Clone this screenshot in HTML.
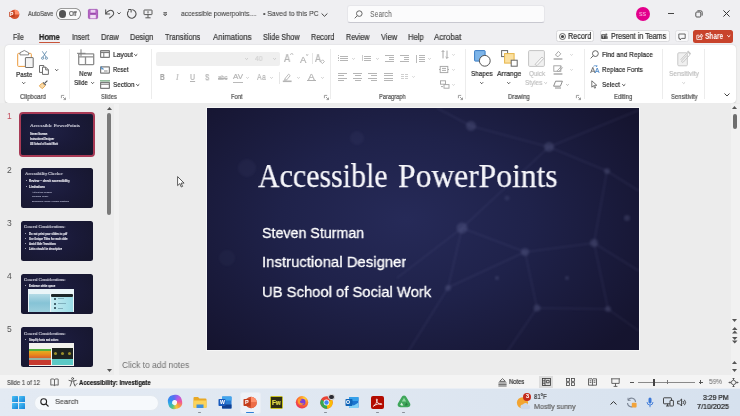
<!DOCTYPE html>
<html lang="en"><head><meta charset="utf-8"><title>accessible powerpoints - PowerPoint</title>
<style>
*{box-sizing:border-box;margin:0;padding:0}
html,body{width:740px;height:416px;overflow:hidden;background:#f0f0f0;font-family:"Liberation Sans",sans-serif}
#app{position:absolute;left:0;top:0;width:740px;height:416px;overflow:hidden;background:#f0f0f0}
.t{-webkit-text-stroke:.22px;position:absolute;white-space:nowrap;transform-origin:0 50%;display:block;will-change:transform}
.a{position:absolute}
svg{position:absolute;overflow:visible}
.sep{position:absolute;width:1px;background:#ececec;top:49px;height:50px}
</style></head><body><div id="app">
<div class="a" style="left:0;top:0;width:740px;height:46px;background:#efeff2"></div>
<svg style="left:8.500px;top:8.600px" width="10.800" height="10.800" viewBox="0 0 12 12"><circle cx="6.3" cy="6" r="5.2" fill="#d35230"/><path d="M6.3 .8A5.2 5.2 0 0 1 11.5 6H6.3z" fill="#ff8f6b"/><rect x="0.3" y="3" width="6" height="6" rx="1" fill="#c43e1c"/></svg>
<span class="t" style="left:10.3px;top:11.10px;font-size:5px;line-height:6.00px;color:#fff;font-weight:700;font-family:'Liberation Sans', sans-serif;transform:scaleX(1.0000);-webkit-text-stroke:.08px;">P</span>
<span class="t" style="left:28px;top:10.00px;font-size:7px;line-height:8.40px;color:#555;font-weight:400;font-family:'Liberation Sans', sans-serif;transform:scaleX(0.8333);">AutoSave</span>
<div class="a" style="left:56px;top:8.200px;width:25px;height:11.600px;box-shadow:inset 0 0 0 .85px #7d7d7d;border-radius:6px;background:#fafafa"></div>
<div class="a" style="left:58.5px;top:10.3px;width:7.4px;height:7.4px;border-radius:50%;background:#555"></div>
<span class="t" style="left:69px;top:10.30px;font-size:6.5px;line-height:7.80px;color:#555;font-weight:400;font-family:'Liberation Sans', sans-serif;transform:scaleX(0.8889);">Off</span>
<svg style="left:88px;top:8.8px" width="10" height="10" viewBox="0 0 10 10"><rect x=".4" y=".4" width="9.200" height="9.200" rx="1" fill="#b565c4" stroke="#9a45ad" stroke-width=".8"/><rect x="2.600" y=".8" width="4.800" height="2.800" fill="#e9cdf0"/><rect x="2.200" y="5.800" width="5.600" height="3.600" fill="#f0def4"/><rect x="2.200" y="4.400" width="5.600" height="1" fill="#8a3aa0"/></svg>
<svg style="left:104px;top:8px" width="12" height="12" viewBox="0 0 12 12" fill="none" stroke="#505050" stroke-width="1.050" stroke-linecap="round" stroke-linejoin="round"><path d="M1.700 1.800v4.200h4"/><path d="M1.900 5.800C3.400 2.800 6.600 1.400 8.600 3c1.800 1.500 1.300 3.800-.6 5.200L5.600 10"/></svg>
<svg style="left:117px;top:12.3px" width="4" height="2.400" viewBox="0 0 4 2.400" fill="none" stroke="#444" stroke-width=".9"><path d="M.4 .4l1.600 1.600 1.600-1.600"/></svg>
<svg style="left:126px;top:8px" width="12" height="12" viewBox="0 0 12 12" fill="none" stroke="#505050" stroke-width="1.050" stroke-linecap="round" stroke-linejoin="round"><path d="M2.600 1.400h2.500v2.500"/><path d="M6.710 1.650A4.300 4.300 0 1 1 2.600 2.900"/></svg>
<svg style="left:143px;top:8.700px" width="10" height="10" viewBox="0 0 10 10" fill="none" stroke="#505050" stroke-width=".95"><rect x="1" y="1" width="8" height="4.600" rx=".4"/><path d="M5 5.600v3M2.400 8.800h5.200M5 2.200v2.200"/></svg>
<svg style="left:162.500px;top:11.600px" width="4.400" height="4.600" viewBox="0 0 4.400 4.600" fill="none" stroke="#444" stroke-width=".8"><path d="M.4 .6h3.600M.6 2l1.600 2 1.600-2z"/></svg>
<span class="t" style="left:181px;top:9.30px;font-size:8px;line-height:9.60px;color:#444;font-weight:400;font-family:'Liberation Sans', sans-serif;transform:scaleX(0.8261);-webkit-text-stroke:.1px;">accessible powerpoints....</span>
<span class="t" style="left:263px;top:9.30px;font-size:8px;line-height:9.60px;color:#444;font-weight:400;font-family:'Liberation Sans', sans-serif;transform:scaleX(0.8615);-webkit-text-stroke:.1px;">• Saved to this PC</span>
<svg style="left:321px;top:12.500px" width="7" height="4" viewBox="0 0 7 4" fill="none" stroke="#444" stroke-width="1"><path d="M.6 .5l2.9 2.8 2.9-2.8"/></svg>
<div class="a" style="left:347px;top:5px;width:198px;height:18px;border-radius:3px;background:#fbfbfc;border:1px solid #e6e6ea;border-bottom-color:#c8c8d0"></div>
<svg style="left:354px;top:10px" width="9" height="9" viewBox="0 0 9 9" fill="none" stroke="#666" stroke-width="1"><circle cx="5.3" cy="3.6" r="2.8"/><path d="M3.3 5.7L.7 8.3"/></svg>
<span class="t" style="left:370.4px;top:9.00px;font-size:8.5px;line-height:10.20px;color:#5e5e5e;font-weight:400;font-family:'Liberation Sans', sans-serif;transform:scaleX(0.8074);-webkit-text-stroke:0;">Search</span>
<div class="a" style="left:635.5px;top:6.8px;width:14px;height:14px;border-radius:50%;background:#e3008c"></div>
<span class="t" style="left:638.8px;top:11.00px;font-size:5px;line-height:6.00px;color:#f7b3dc;font-weight:400;font-family:'Liberation Sans', sans-serif;transform:scaleX(1.0571);-webkit-text-stroke:.08px;">SS</span>
<div class="a" style="left:668px;top:12.6px;width:5.5px;height:1px;background:#444"></div>
<svg style="left:694.5px;top:9.5px" width="8" height="8" viewBox="0 0 8 8" fill="none" stroke="#444" stroke-width=".9"><rect x=".8" y="2" width="5" height="5" rx="1"/><path d="M2.4 .8h3.3a1.5 1.5 0 0 1 1.5 1.5v3.3"/></svg>
<svg style="left:722.5px;top:9.5px" width="7" height="7" viewBox="0 0 7 7" fill="none" stroke="#333" stroke-width="1"><path d="M.4 .4l6.2 6.2M6.6 .4L.4 6.6"/></svg>
<span class="t" style="left:13px;top:31.50px;font-size:8.5px;line-height:10.20px;color:#3a3a3a;font-weight:400;font-family:'Liberation Sans', sans-serif;transform:scaleX(0.7857);">File</span>
<span class="t" style="left:39px;top:31.50px;font-size:8.5px;line-height:10.20px;color:#222;font-weight:700;font-family:'Liberation Sans', sans-serif;transform:scaleX(0.8750);">Home</span>
<span class="t" style="left:72px;top:31.50px;font-size:8.5px;line-height:10.20px;color:#3a3a3a;font-weight:400;font-family:'Liberation Sans', sans-serif;transform:scaleX(0.8095);">Insert</span>
<span class="t" style="left:101px;top:31.50px;font-size:8.5px;line-height:10.20px;color:#3a3a3a;font-weight:400;font-family:'Liberation Sans', sans-serif;transform:scaleX(0.9000);">Draw</span>
<span class="t" style="left:130px;top:31.50px;font-size:8.5px;line-height:10.20px;color:#3a3a3a;font-weight:400;font-family:'Liberation Sans', sans-serif;transform:scaleX(0.8846);">Design</span>
<span class="t" style="left:165px;top:31.50px;font-size:8.5px;line-height:10.20px;color:#3a3a3a;font-weight:400;font-family:'Liberation Sans', sans-serif;transform:scaleX(0.8537);">Transitions</span>
<span class="t" style="left:212.5px;top:31.50px;font-size:8.5px;line-height:10.20px;color:#3a3a3a;font-weight:400;font-family:'Liberation Sans', sans-serif;transform:scaleX(0.9167);">Animations</span>
<span class="t" style="left:263px;top:31.50px;font-size:8.5px;line-height:10.20px;color:#3a3a3a;font-weight:400;font-family:'Liberation Sans', sans-serif;transform:scaleX(0.8605);">Slide Show</span>
<span class="t" style="left:311px;top:31.50px;font-size:8.5px;line-height:10.20px;color:#3a3a3a;font-weight:400;font-family:'Liberation Sans', sans-serif;transform:scaleX(0.8519);">Record</span>
<span class="t" style="left:345.5px;top:31.50px;font-size:8.5px;line-height:10.20px;color:#3a3a3a;font-weight:400;font-family:'Liberation Sans', sans-serif;transform:scaleX(0.8393);">Review</span>
<span class="t" style="left:380.7px;top:31.50px;font-size:8.5px;line-height:10.20px;color:#3a3a3a;font-weight:400;font-family:'Liberation Sans', sans-serif;transform:scaleX(0.8778);">View</span>
<span class="t" style="left:407.7px;top:31.50px;font-size:8.5px;line-height:10.20px;color:#3a3a3a;font-weight:400;font-family:'Liberation Sans', sans-serif;transform:scaleX(0.9000);">Help</span>
<span class="t" style="left:434px;top:31.50px;font-size:8.5px;line-height:10.20px;color:#3a3a3a;font-weight:400;font-family:'Liberation Sans', sans-serif;transform:scaleX(0.9310);">Acrobat</span>
<div class="a" style="left:39px;top:41.700px;width:21px;height:1.200px;border-radius:1px;background:#c8543a"></div>
<div class="a" style="left:556.400px;top:30.200px;width:38px;height:12px;border:1px solid #d9d9dc;border-radius:2.500px;background:#fcfcfc"></div>
<svg style="left:558.5px;top:33.3px" width="7" height="7" viewBox="0 0 7 7"><circle cx="3.5" cy="3.5" r="3" fill="none" stroke="#444" stroke-width=".8"/><circle cx="3.5" cy="3.5" r="1.6" fill="#444"/></svg>
<span class="t" style="left:568px;top:31.12px;font-size:8.8px;line-height:10.56px;color:#2e2e2e;font-weight:400;font-family:'Liberation Sans', sans-serif;transform:scaleX(0.8214);">Record</span>
<div class="a" style="left:599.600px;top:30.200px;width:70px;height:12px;border:1px solid #d9d9dc;border-radius:2.500px;background:#fcfcfc"></div>
<svg style="left:601.400px;top:33px" width="7" height="7" viewBox="0 0 7 7"><circle cx="5.300" cy="1.700" r="1.100" fill="#666"/><rect x="3.600" y="2.900" width="3.200" height="3.200" rx=".9" fill="#777"/><rect x=".2" y="1.200" width="4.400" height="4.800" rx=".7" fill="#4a4a4a"/><path d="M1.200 2.600h2.400M2.400 2.600v2.600" stroke="#fff" stroke-width=".6"/></svg>
<span class="t" style="left:611.2px;top:31.12px;font-size:8.8px;line-height:10.56px;color:#2e2e2e;font-weight:400;font-family:'Liberation Sans', sans-serif;transform:scaleX(0.8132);">Present in Teams</span>
<div class="a" style="left:675px;top:30.200px;width:13.500px;height:12px;border:1px solid #e2e2e5;border-radius:2.500px;background:#f8f8fa"></div>
<svg style="left:678px;top:32.5px" width="8" height="8" viewBox="0 0 8 8" fill="none" stroke="#444" stroke-width=".8" stroke-linejoin="round"><path d="M.8 1h6.4v4.4H3.6L2 7V5.4H.8z"/></svg>
<div class="a" style="left:692.700px;top:29.800px;width:40.300px;height:12.800px;border-radius:2.500px;background:#c8432c"></div>
<svg style="left:695.5px;top:33px" width="7" height="7" viewBox="0 0 7 7" fill="none" stroke="#fff" stroke-width=".8" stroke-linejoin="round"><path d="M3 2.2H.8v4.2h5V4.8"/><path d="M2.4 4.8c.3-1.6 1.3-2.5 2.8-2.5V.9l1.6 1.9-1.6 1.9V3.4C4 3.4 3 3.8 2.4 4.8z"/></svg>
<span class="t" style="left:705px;top:31.12px;font-size:8.8px;line-height:10.56px;color:#fff;font-weight:700;font-family:'Liberation Sans', sans-serif;transform:scaleX(0.7375);-webkit-text-stroke:0;">Share</span>
<svg style="left:727px;top:35.400px" width="3.600" height="2.200" viewBox="0 0 3.600 2.200" fill="none" stroke="#fff" stroke-width="1"><path d="M.3 .3l1.500 1.500 1.500-1.500"/></svg>
<div class="a" style="left:5px;top:45px;width:731px;height:58px;border-radius:4px;background:#fff;box-shadow:0 .5px 1.5px rgba(0,0,0,.18)"></div>
<div class="sep" style="left:68.5px"></div>
<div class="sep" style="left:150.5px"></div>
<div class="sep" style="left:330px"></div>
<div class="sep" style="left:464.5px"></div>
<div class="sep" style="left:584px"></div>
<div class="sep" style="left:662px"></div>
<div class="sep" style="left:704px"></div>
<svg style="left:16.500px;top:49.500px" width="17" height="18" viewBox="0 0 17 18" fill="none"><path d="M3 3.400H1.500a.8 .8 0 0 0-.8 .8v11.400a.8 .8 0 0 0 .8 .8H8" stroke="#ec9a3c" stroke-width="1"/><path d="M11.600 3.400h1.900a.8 .8 0 0 1 .8 .8v3" stroke="#ec9a3c" stroke-width="1"/><path d="M3 4.900V2.700L7.300 .5l4.300 2.200v2.200z" stroke="#7a7a7a" stroke-width=".9" fill="#fff"/><rect x="8.400" y="7.600" width="7.800" height="9.900" rx=".3" fill="#f4f4f4" stroke="#666" stroke-width=".95"/></svg>
<span class="t" style="left:15.5px;top:69.50px;font-size:8px;line-height:9.60px;color:#2e2e2e;font-weight:400;font-family:'Liberation Sans', sans-serif;transform:scaleX(0.8000);">Paste</span>
<svg style="left:21.8px;top:82.0px" width="3.4" height="2" viewBox="0 0 3.4 2" fill="none" stroke="#444" stroke-width="1"><path d="M.3 .3L1.7 1.7L3.1 .3"/></svg>
<svg style="left:40.500px;top:50.500px" width="7" height="9" viewBox="0 0 7 9" fill="none" stroke="#5482a6" stroke-width=".8"><path d="M1.300 .3l3.900 5.900M5.700 .3L1.800 6.200"/><circle cx="1.600" cy="7.200" r="1.100"/><circle cx="5.400" cy="7.200" r="1.100"/></svg>
<svg style="left:39px;top:64.500px" width="10" height="10" viewBox="0 0 10 10" fill="none" stroke="#555" stroke-width=".85"><path d="M3.200 7.400H.5V.5h4.300v1.700"/><path d="M3.500 2.200h3.400l2.500 2.500v4.700H3.500z" fill="#fff"/><path d="M6.700 2.400v2.500h2.500"/></svg>
<svg style="left:55.3px;top:69.0px" width="3.4" height="2" viewBox="0 0 3.4 2" fill="none" stroke="#444" stroke-width="1"><path d="M.3 .3L1.7 1.7L3.1 .3"/></svg>
<svg style="left:39.300px;top:79.500px" width="9" height="9" viewBox="0 0 9 9" fill="none"><path d="M5.800 3.200L8.400 .6" stroke="#555" stroke-width="1.200"/><path d="M3.400 3l2.800 2.800-2.600 2.600a.6 .6 0 0 1-.8 0L.6 6.200a.6 .6 0 0 1 0-.8z" fill="#f8d9a8" stroke="#e39a35" stroke-width=".8"/><path d="M4 2.400l2.800 2.800" stroke="#555" stroke-width="1.100"/></svg>
<span class="t" style="left:20px;top:92.80px;font-size:7px;line-height:8.40px;color:#555;font-weight:400;font-family:'Liberation Sans', sans-serif;transform:scaleX(0.8667);">Clipboard</span>
<svg style="left:61.0px;top:94.5px" width="5" height="5" viewBox="0 0 5 5" fill="none" stroke="#777" stroke-width=".7"><path d="M.4 3.2V.4h2.8"/><path d="M2 2l2.4 2.4M4.5 2.6v2h-2"/></svg>
<svg style="left:75.500px;top:49px" width="19" height="17" viewBox="0 0 19 17" fill="none" stroke="#8c8c8c" stroke-width="1.300"><rect x="2.700" y="4.800" width="15" height="10.800" rx=".5"/><path d="M2.700 7.800h15M9.500 7.800v7.800"/><path d="M5 .3v7M1 4.300h8.500" stroke="#808080" stroke-width="1"/></svg>
<span class="t" style="left:78.8px;top:68.80px;font-size:8px;line-height:9.60px;color:#2e2e2e;font-weight:400;font-family:'Liberation Sans', sans-serif;transform:scaleX(0.8125);">New</span>
<span class="t" style="left:74.4px;top:77.80px;font-size:8px;line-height:9.60px;color:#2e2e2e;font-weight:400;font-family:'Liberation Sans', sans-serif;transform:scaleX(0.7833);">Slide</span>
<svg style="left:91.2px;top:82.05px" width="3.2" height="1.9" viewBox="0 0 3.2 1.9" fill="none" stroke="#444" stroke-width="1"><path d="M.3 .3L1.6 1.5999999999999999L2.9000000000000004 .3"/></svg>
<svg style="left:100px;top:50.3px" width="10" height="8" viewBox="0 0 10 8" fill="none" stroke="#7c7c7c" stroke-width="1.200"><rect x=".6" y=".6" width="8.800" height="6.800" rx=".4"/><path d="M.6 2.400h8.800" stroke-width="1.400"/><path d="M3.800 2.600v5" stroke-width="1"/></svg>
<span class="t" style="left:112.5px;top:49.50px;font-size:8px;line-height:9.60px;color:#2e2e2e;font-weight:400;font-family:'Liberation Sans', sans-serif;transform:scaleX(0.8333);">Layout</span>
<svg style="left:134.39999999999998px;top:53.8px" width="3.6" height="2" viewBox="0 0 3.6 2" fill="none" stroke="#444" stroke-width="1"><path d="M.3 .3L1.8 1.7L3.3000000000000003 .3"/></svg>
<svg style="left:100px;top:65.8px" width="10" height="8" viewBox="0 0 10 8" fill="none" stroke="#7c7c7c" stroke-width="1.200"><rect x=".6" y=".8" width="8.800" height="6.400" rx=".4"/><path d="M3.200 3.400L1.400 1.200M1.300 .3v2.600h2.400" stroke="#5a93c8" stroke-width="1"/><path d="M4 5h3.600" stroke-width=".9"/></svg>
<span class="t" style="left:112.5px;top:64.70px;font-size:8px;line-height:9.60px;color:#2e2e2e;font-weight:400;font-family:'Liberation Sans', sans-serif;transform:scaleX(0.7381);">Reset</span>
<svg style="left:100px;top:80.0px" width="10" height="9" viewBox="0 0 10 9" fill="none" stroke="#7c7c7c" stroke-width="1.200"><rect x=".6" y="2.400" width="8.800" height="6" rx=".4"/><path d="M0 .8h10" stroke="#8dbb97" stroke-width="1.500"/><path d="M.6 4.200h8.800" stroke-width="1.100"/></svg>
<span class="t" style="left:112.5px;top:79.70px;font-size:8px;line-height:9.60px;color:#2e2e2e;font-weight:400;font-family:'Liberation Sans', sans-serif;transform:scaleX(0.8037);">Section</span>
<svg style="left:136.39999999999998px;top:84.0px" width="3.6" height="2" viewBox="0 0 3.6 2" fill="none" stroke="#444" stroke-width="1"><path d="M.3 .3L1.8 1.7L3.3000000000000003 .3"/></svg>
<span class="t" style="left:101px;top:92.80px;font-size:7px;line-height:8.40px;color:#555;font-weight:400;font-family:'Liberation Sans', sans-serif;transform:scaleX(0.8316);">Slides</span>
<div class="a" style="left:155.500px;top:52px;width:95px;height:13.500px;background:#efefef;border-radius:2px 0 0 2px"></div>
<div class="a" style="left:251px;top:52px;width:29px;height:13.500px;background:#efefef;border-radius:0 2px 2px 0"></div>
<svg style="left:245.4px;top:58.1px" width="3.2" height="1.8" viewBox="0 0 3.2 1.8" fill="none" stroke="#c8c8c8" stroke-width="1"><path d="M.3 .3L1.6 1.5L2.9000000000000004 .3"/></svg>
<span class="t" style="left:254.5px;top:54.60px;font-size:7px;line-height:8.40px;color:#d2d2d2;font-weight:400;font-family:'Liberation Sans', sans-serif;transform:scaleX(0.9375);">40</span>
<svg style="left:272.9px;top:58.1px" width="3.2" height="1.8" viewBox="0 0 3.2 1.8" fill="none" stroke="#c8c8c8" stroke-width="1"><path d="M.3 .3L1.6 1.5L2.9000000000000004 .3"/></svg>
<span class="t" style="left:283.8px;top:52.00px;font-size:10.5px;line-height:12.60px;color:#b4b4b4;font-weight:400;font-family:'Liberation Sans', sans-serif;transform:scaleX(0.8857);">A</span>
<span class="t" style="left:290.3px;top:52.00px;font-size:5px;line-height:6.00px;color:#b4b4b4;font-weight:400;font-family:'Liberation Sans', sans-serif;transform:scaleX(1.5000);-webkit-text-stroke:.08px;">^</span>
<span class="t" style="left:299.5px;top:53.50px;font-size:9.5px;line-height:11.40px;color:#b4b4b4;font-weight:400;font-family:'Liberation Sans', sans-serif;transform:scaleX(1.0000);">A</span>
<span class="t" style="left:305.8px;top:52.80px;font-size:4px;line-height:4.80px;color:#b4b4b4;font-weight:400;font-family:'Liberation Sans', sans-serif;transform:scaleX(1.2000);-webkit-text-stroke:.08px;">v</span>
<div class="a" style="left:312px;top:53px;width:1px;height:11px;background:#e6e6e6"></div>
<span class="t" style="left:315px;top:52.00px;font-size:10.5px;line-height:12.60px;color:#b4b4b4;font-weight:400;font-family:'Liberation Sans', sans-serif;transform:scaleX(0.8571);">A</span>
<svg style="left:320px;top:58.800px" width="5" height="5" viewBox="0 0 5 5" fill="none" stroke="#b0b0b0" stroke-width=".9"><path d="M.6 2.800L2.600 .8l1.800 1.800-2 2z"/></svg>
<span class="t" style="left:159.5px;top:72.40px;font-size:8.5px;line-height:10.20px;color:#a8a8a8;font-weight:700;font-family:'Liberation Sans', sans-serif;transform:scaleX(0.7500);">B</span>
<span class="t" style="left:175.5px;top:72.40px;font-size:8.5px;line-height:10.20px;color:#b4b4b4;font-weight:400;font-family:'Liberation Serif', serif;transform:scaleX(0.8333);font-style:italic;">I</span>
<span class="t" style="left:189.5px;top:72.10px;font-size:8.5px;line-height:10.20px;color:#b4b4b4;font-weight:400;font-family:'Liberation Sans', sans-serif;transform:scaleX(0.8333);text-decoration:underline;">U</span>
<span class="t" style="left:204.8px;top:72.40px;font-size:8.5px;line-height:10.20px;color:#b4b4b4;font-weight:400;font-family:'Liberation Sans', sans-serif;transform:scaleX(0.7333);text-shadow:.6px .6px 0 #d8d8d8;">S</span>
<span class="t" style="left:218px;top:73.90px;font-size:6.5px;line-height:7.80px;color:#b4b4b4;font-weight:400;font-family:'Liberation Sans', sans-serif;transform:scaleX(0.9000);text-decoration:line-through;">abc</span>
<span class="t" style="left:233px;top:72.20px;font-size:7.5px;line-height:9.00px;color:#b4b4b4;font-weight:400;font-family:'Liberation Sans', sans-serif;transform:scaleX(1.0556);">AV</span>
<div class="a" style="left:233px;top:81.5px;width:9.500px;height:.8px;background:#b9b9b9"></div>
<svg style="left:245.5px;top:77.15px" width="3" height="1.7" viewBox="0 0 3 1.7" fill="none" stroke="#c8c8c8" stroke-width="1"><path d="M.3 .3L1.5 1.4L2.7 .3"/></svg>
<span class="t" style="left:257px;top:71.90px;font-size:9px;line-height:10.80px;color:#b4b4b4;font-weight:400;font-family:'Liberation Sans', sans-serif;transform:scaleX(0.7538);letter-spacing:.8px;">Aa</span>
<svg style="left:269.9px;top:77.15px" width="3" height="1.7" viewBox="0 0 3 1.7" fill="none" stroke="#c8c8c8" stroke-width="1"><path d="M.3 .3L1.5 1.4L2.7 .3"/></svg>
<div class="a" style="left:278.500px;top:71.5px;width:1px;height:12px;background:#e6e6e6"></div>
<svg style="left:283px;top:72.5px" width="8" height="10" viewBox="0 0 8 10" fill="none" stroke="#b4b4b4" stroke-width=".9"><path d="M2 5.600L5.600 1.200l1.600 1.400L3.600 7z"/><path d="M2 5.600L1.400 7.400l2.200-.4"/><path d="M-.2 8.300h8.800" stroke-width="1.600"/></svg>
<svg style="left:297.0px;top:77.15px" width="3" height="1.7" viewBox="0 0 3 1.7" fill="none" stroke="#c8c8c8" stroke-width="1"><path d="M.3 .3L1.5 1.4L2.7 .3"/></svg>
<span class="t" style="left:308.3px;top:70.50px;font-size:9.5px;line-height:11.40px;color:#b4b4b4;font-weight:400;font-family:'Liberation Sans', sans-serif;transform:scaleX(1.0667);">A</span>
<div class="a" style="left:306.800px;top:79.800px;width:9.200px;height:1.600px;background:#b2b2b2"></div>
<svg style="left:320.5px;top:77.15px" width="3" height="1.7" viewBox="0 0 3 1.7" fill="none" stroke="#c8c8c8" stroke-width="1"><path d="M.3 .3L1.5 1.4L2.7 .3"/></svg>
<span class="t" style="left:230.5px;top:92.80px;font-size:7px;line-height:8.40px;color:#555;font-weight:400;font-family:'Liberation Sans', sans-serif;transform:scaleX(0.8214);">Font</span>
<svg style="left:323.5px;top:94.5px" width="5" height="5" viewBox="0 0 5 5" fill="none" stroke="#777" stroke-width=".7"><path d="M.4 3.2V.4h2.8"/><path d="M2 2l2.4 2.4M4.5 2.6v2h-2"/></svg>
<div class="a" style="left:339.5px;top:55.5px;width:8px;height:.95px;background:#b6b6b6"></div><div class="a" style="left:339.5px;top:57.7px;width:8px;height:.95px;background:#b6b6b6"></div><div class="a" style="left:339.5px;top:59.9px;width:8px;height:.95px;background:#b6b6b6"></div>
<div class="a" style="left:337.500px;top:55.2px;width:1.2px;height:1.2px;background:#bbb"></div><div class="a" style="left:337.500px;top:57.4px;width:1.2px;height:1.2px;background:#bbb"></div><div class="a" style="left:337.500px;top:59.6px;width:1.2px;height:1.2px;background:#bbb"></div>
<div class="a" style="left:339.5px;top:61.2px;width:0px;height:.95px;background:#b6b6b6"></div>
<svg style="left:352.3px;top:58.15px" width="3" height="1.7" viewBox="0 0 3 1.7" fill="none" stroke="#c8c8c8" stroke-width="1"><path d="M.3 .3L1.5 1.4L2.7 .3"/></svg>
<div class="a" style="left:363.5px;top:55.5px;width:7.5px;height:.95px;background:#b6b6b6"></div><div class="a" style="left:363.5px;top:57.7px;width:7.5px;height:.95px;background:#b6b6b6"></div><div class="a" style="left:363.5px;top:59.9px;width:7.5px;height:.95px;background:#b6b6b6"></div>
<div class="a" style="left:361.500px;top:55px;width:1px;height:6px;background:#ccc"></div>
<svg style="left:376.0px;top:58.15px" width="3" height="1.7" viewBox="0 0 3 1.7" fill="none" stroke="#c8c8c8" stroke-width="1"><path d="M.3 .3L1.5 1.4L2.7 .3"/></svg>
<div class="a" style="left:385px;top:54.6px;width:9px;height:.95px;background:#b6b6b6"></div><div class="a" style="left:388.5px;top:56.800000000000004px;width:5.5px;height:.95px;background:#b6b6b6"></div><div class="a" style="left:388.5px;top:59.0px;width:5.5px;height:.95px;background:#b6b6b6"></div><div class="a" style="left:385px;top:61.2px;width:9px;height:.95px;background:#b6b6b6"></div>
<div class="a" style="left:400px;top:54.6px;width:9px;height:.95px;background:#b6b6b6"></div><div class="a" style="left:403.5px;top:56.800000000000004px;width:5.5px;height:.95px;background:#b6b6b6"></div><div class="a" style="left:403.5px;top:59.0px;width:5.5px;height:.95px;background:#b6b6b6"></div><div class="a" style="left:400px;top:61.2px;width:9px;height:.95px;background:#b6b6b6"></div>
<div class="a" style="left:419px;top:54.6px;width:6px;height:.95px;background:#b6b6b6"></div><div class="a" style="left:419px;top:56.800000000000004px;width:6px;height:.95px;background:#b6b6b6"></div><div class="a" style="left:419px;top:59.0px;width:6px;height:.95px;background:#b6b6b6"></div><div class="a" style="left:419px;top:61.2px;width:6px;height:.95px;background:#b6b6b6"></div>
<div class="a" style="left:416.200px;top:54.5px;width:.9px;height:8px;background:#bbb"></div>
<svg style="left:427.5px;top:58.15px" width="3" height="1.7" viewBox="0 0 3 1.7" fill="none" stroke="#c8c8c8" stroke-width="1"><path d="M.3 .3L1.5 1.4L2.7 .3"/></svg>
<div class="a" style="left:337.7px;top:73.2px;width:9px;height:.95px;background:#b6b6b6"></div><div class="a" style="left:337.7px;top:75.4px;width:6.5px;height:.95px;background:#b6b6b6"></div><div class="a" style="left:337.7px;top:77.60000000000001px;width:9px;height:.95px;background:#b6b6b6"></div><div class="a" style="left:337.7px;top:79.8px;width:6.5px;height:.95px;background:#b6b6b6"></div>
<div class="a" style="left:353.2px;top:73.2px;width:9px;height:.95px;background:#b6b6b6"></div><div class="a" style="left:354.7px;top:75.4px;width:6px;height:.95px;background:#b6b6b6"></div><div class="a" style="left:353.2px;top:77.60000000000001px;width:9px;height:.95px;background:#b6b6b6"></div><div class="a" style="left:354.7px;top:79.8px;width:6px;height:.95px;background:#b6b6b6"></div>
<div class="a" style="left:368.3px;top:73.2px;width:9px;height:.95px;background:#b6b6b6"></div><div class="a" style="left:370.8px;top:75.4px;width:6.5px;height:.95px;background:#b6b6b6"></div><div class="a" style="left:368.3px;top:77.60000000000001px;width:9px;height:.95px;background:#b6b6b6"></div><div class="a" style="left:370.8px;top:79.8px;width:6.5px;height:.95px;background:#b6b6b6"></div>
<div class="a" style="left:383.7px;top:73.2px;width:9px;height:.95px;background:#b6b6b6"></div><div class="a" style="left:383.7px;top:75.4px;width:9px;height:.95px;background:#b6b6b6"></div><div class="a" style="left:383.7px;top:77.60000000000001px;width:9px;height:.95px;background:#b6b6b6"></div><div class="a" style="left:383.7px;top:79.8px;width:9px;height:.95px;background:#b6b6b6"></div>
<div class="a" style="left:400.8px;top:73.8px;width:3px;height:.95px;background:#cfcfcf"></div><div class="a" style="left:400.8px;top:76.0px;width:3px;height:.95px;background:#cfcfcf"></div><div class="a" style="left:400.8px;top:78.2px;width:3px;height:.95px;background:#cfcfcf"></div>
<div class="a" style="left:404.6px;top:73.8px;width:3px;height:.95px;background:#cfcfcf"></div><div class="a" style="left:404.6px;top:76.0px;width:3px;height:.95px;background:#cfcfcf"></div><div class="a" style="left:404.6px;top:78.2px;width:3px;height:.95px;background:#cfcfcf"></div>
<svg style="left:412.3px;top:76.15px" width="3" height="1.7" viewBox="0 0 3 1.7" fill="none" stroke="#d0d0d0" stroke-width="1"><path d="M.3 .3L1.5 1.4L2.7 .3"/></svg>
<svg style="left:440.500px;top:49.500px" width="8" height="9" viewBox="0 0 8 9" fill="none" stroke="#a6a6a6" stroke-width="1"><path d="M2 .6v7.800M.6 2l1.400-1.400L3.400 2M6 .6v7.800M4.600 7l1.400 1.400L7.400 7"/></svg>
<svg style="left:452.3px;top:53.65px" width="3" height="1.7" viewBox="0 0 3 1.7" fill="none" stroke="#d0d0d0" stroke-width="1"><path d="M.3 .3L1.5 1.4L2.7 .3"/></svg>
<svg style="left:439.300px;top:64.500px" width="10" height="9" viewBox="0 0 10 9" fill="none" stroke="#a6a6a6" stroke-width=".95"><rect x="1.200" y="1.400" width="7.600" height="6.200"/><path d="M3 3.400h4M3 5.400h4M0 4.500h1.200M8.800 4.500H10"/></svg>
<svg style="left:452.3px;top:68.95px" width="3" height="1.7" viewBox="0 0 3 1.7" fill="none" stroke="#d0d0d0" stroke-width="1"><path d="M.3 .3L1.5 1.4L2.7 .3"/></svg>
<svg style="left:439.800px;top:80px" width="10" height="9" viewBox="0 0 10 9" fill="none" stroke="#a6a6a6" stroke-width=".95"><rect x=".5" y=".8" width="5" height="3.400"/><rect x="4" y="4.600" width="5" height="3.600"/><path d="M1 6.600h2"/></svg>
<svg style="left:452.3px;top:83.95px" width="3" height="1.7" viewBox="0 0 3 1.7" fill="none" stroke="#d0d0d0" stroke-width="1"><path d="M.3 .3L1.5 1.4L2.7 .3"/></svg>
<span class="t" style="left:379px;top:92.80px;font-size:7px;line-height:8.40px;color:#555;font-weight:400;font-family:'Liberation Sans', sans-serif;transform:scaleX(0.8182);">Paragraph</span>
<svg style="left:457.5px;top:94.5px" width="5" height="5" viewBox="0 0 5 5" fill="none" stroke="#777" stroke-width=".7"><path d="M.4 3.2V.4h2.8"/><path d="M2 2l2.4 2.4M4.5 2.6v2h-2"/></svg>
<svg style="left:473.500px;top:50px" width="17" height="17" viewBox="0 0 17 17"><rect x=".6" y=".6" width="10.500" height="10.500" rx=".6" fill="#7db4e8" stroke="#3a7cc4" stroke-width="1"/><circle cx="10.800" cy="10.800" r="5.400" fill="#fff" stroke="#555" stroke-width="1"/></svg>
<span class="t" style="left:470.5px;top:68.50px;font-size:8px;line-height:9.60px;color:#2e2e2e;font-weight:400;font-family:'Liberation Sans', sans-serif;transform:scaleX(0.7963);">Shapes</span>
<svg style="left:479.5px;top:82.0px" width="3.4" height="2" viewBox="0 0 3.4 2" fill="none" stroke="#444" stroke-width="1"><path d="M.3 .3L1.7 1.7L3.1 .3"/></svg>
<svg style="left:500.500px;top:50px" width="17" height="17" viewBox="0 0 17 17"><rect x=".6" y=".6" width="6" height="6" fill="#fff" stroke="#666" stroke-width="1"/><rect x="3.600" y="3.600" width="9.500" height="9.500" fill="#fbe0a0" stroke="#e6b548" stroke-width="1"/><rect x="10.200" y="10.200" width="6" height="6" fill="#fff" stroke="#666" stroke-width="1"/></svg>
<span class="t" style="left:496.8px;top:68.50px;font-size:8px;line-height:9.60px;color:#2e2e2e;font-weight:400;font-family:'Liberation Sans', sans-serif;transform:scaleX(0.8571);">Arrange</span>
<svg style="left:506.5px;top:82.0px" width="3.4" height="2" viewBox="0 0 3.4 2" fill="none" stroke="#444" stroke-width="1"><path d="M.3 .3L1.7 1.7L3.1 .3"/></svg>
<svg style="left:528px;top:50px" width="17" height="17" viewBox="0 0 17 17" fill="none" stroke="#c4c4c4" stroke-width="1"><rect x=".6" y=".6" width="15.800" height="15.800" rx="1" fill="#f1f1f1"/><path d="M7 14.500L14 7l1.600 1.600L9 15.600z" fill="#fafafa"/></svg>
<span class="t" style="left:528.8px;top:68.50px;font-size:8px;line-height:9.60px;color:#c2c2c2;font-weight:400;font-family:'Liberation Sans', sans-serif;transform:scaleX(0.7850);">Quick</span>
<span class="t" style="left:524.5px;top:78.00px;font-size:8px;line-height:9.60px;color:#c2c2c2;font-weight:400;font-family:'Liberation Sans', sans-serif;transform:scaleX(0.7955);">Styles</span>
<svg style="left:543.8px;top:82.25px" width="3.4" height="1.9" viewBox="0 0 3.4 1.9" fill="none" stroke="#c8c8c8" stroke-width="1"><path d="M.3 .3L1.7 1.5999999999999999L3.1 .3"/></svg>
<svg style="left:553px;top:49.500px" width="10" height="10" viewBox="0 0 10 10" fill="none" stroke="#a4a4a4" stroke-width=".95"><path d="M2.400 5L5.400 1.400l2.400 2.400L5 6.800z"/><path d="M.6 9h8.800" stroke-width="1.400"/></svg>
<svg style="left:569.5px;top:53.65px" width="3" height="1.7" viewBox="0 0 3 1.7" fill="none" stroke="#d0d0d0" stroke-width="1"><path d="M.3 .3L1.5 1.4L2.7 .3"/></svg>
<svg style="left:553px;top:64.500px" width="10" height="10" viewBox="0 0 10 10" fill="none" stroke="#a4a4a4" stroke-width=".95"><rect x=".8" y=".8" width="7" height="5.500"/><path d="M4.200 5.800L8.200 1.600l1.200 1.200L5.400 7z"/><path d="M.6 9h8.800" stroke-width="1.400"/></svg>
<svg style="left:569.5px;top:68.95px" width="3" height="1.7" viewBox="0 0 3 1.7" fill="none" stroke="#d0d0d0" stroke-width="1"><path d="M.3 .3L1.5 1.4L2.7 .3"/></svg>
<svg style="left:553px;top:80px" width="10" height="9" viewBox="0 0 10 9" fill="none" stroke="#8c8c8c" stroke-width="1"><path d="M2.600 1.200h6.800L7.400 6.200H.6z"/><path d="M2 8h6" /></svg>
<svg style="left:566.0px;top:83.95px" width="3" height="1.7" viewBox="0 0 3 1.7" fill="none" stroke="#b0b0b0" stroke-width="1"><path d="M.3 .3L1.5 1.4L2.7 .3"/></svg>
<span class="t" style="left:508px;top:92.80px;font-size:7px;line-height:8.40px;color:#555;font-weight:400;font-family:'Liberation Sans', sans-serif;transform:scaleX(0.8462);">Drawing</span>
<svg style="left:576.3px;top:94.5px" width="5" height="5" viewBox="0 0 5 5" fill="none" stroke="#777" stroke-width=".7"><path d="M.4 3.2V.4h2.8"/><path d="M2 2l2.4 2.4M4.5 2.6v2h-2"/></svg>
<svg style="left:590px;top:49.500px" width="9" height="9" viewBox="0 0 9 9" fill="none" stroke="#555" stroke-width=".9"><circle cx="5.400" cy="3.600" r="2.900"/><path d="M3.300 5.700L.6 8.400"/></svg>
<span class="t" style="left:601.8px;top:49.70px;font-size:8px;line-height:9.60px;color:#2e2e2e;font-weight:400;font-family:'Liberation Sans', sans-serif;transform:scaleX(0.8127);">Find and Replace</span>
<svg style="left:589.500px;top:65px" width="10" height="9" viewBox="0 0 10 9" fill="none" stroke="#555" stroke-width=".8"><path d="M.6 8L2.800 2.400 5 8M1.400 6.200h2.800"/><path d="M5.200 8L7.200 3l2 5M5.900 6.400h2.600" stroke="#3a7cc4"/><path d="M3.400 1.400c1-1 2.600-1 3.600 0M7 1.400V.3M7 1.400H5.900" stroke="#3a7cc4" stroke-width=".7"/></svg>
<span class="t" style="left:601.8px;top:64.70px;font-size:8px;line-height:9.60px;color:#2e2e2e;font-weight:400;font-family:'Liberation Sans', sans-serif;transform:scaleX(0.7923);">Replace Fonts</span>
<svg style="left:591px;top:80px" width="7" height="9" viewBox="0 0 7 9" fill="none" stroke="#555" stroke-width=".8" stroke-linejoin="round"><path d="M.8 .8v6.400l1.700-1.500 1.100 2.500 1-.4-1.100-2.500h2.300z"/></svg>
<span class="t" style="left:601.8px;top:79.70px;font-size:8px;line-height:9.60px;color:#2e2e2e;font-weight:400;font-family:'Liberation Sans', sans-serif;transform:scaleX(0.8045);">Select</span>
<svg style="left:621.5px;top:84.0px" width="3.6" height="2" viewBox="0 0 3.6 2" fill="none" stroke="#444" stroke-width="1"><path d="M.3 .3L1.8 1.7L3.3000000000000003 .3"/></svg>
<span class="t" style="left:613.8px;top:92.80px;font-size:7px;line-height:8.40px;color:#555;font-weight:400;font-family:'Liberation Sans', sans-serif;transform:scaleX(0.8571);">Editing</span>
<svg style="left:677px;top:49.500px" width="15" height="17" viewBox="0 0 15 17" fill="none" stroke="#c8c8c8" stroke-width="1"><rect x=".8" y="2.800" width="9.500" height="13" rx="1" fill="#f0f0f0"/><path d="M3.600 9.800L9.800 3.200a1.700 1.700 0 0 1 2.600 2.200L6.400 12a1 1 0 0 1-1.600-1.200l5-5.400" /><path d="M10.600 1.200l3 2.800" stroke-width="1.600"/></svg>
<span class="t" style="left:668.8px;top:69.00px;font-size:8px;line-height:9.60px;color:#c0c0c0;font-weight:400;font-family:'Liberation Sans', sans-serif;transform:scaleX(0.8333);">Sensitivity</span>
<svg style="left:682.3px;top:81.55px" width="3.4" height="1.9" viewBox="0 0 3.4 1.9" fill="none" stroke="#cfcfcf" stroke-width="1"><path d="M.3 .3L1.7 1.5999999999999999L3.1 .3"/></svg>
<span class="t" style="left:670.5px;top:92.80px;font-size:7px;line-height:8.40px;color:#555;font-weight:400;font-family:'Liberation Sans', sans-serif;transform:scaleX(0.8438);">Sensitivity</span>
<svg style="left:724px;top:93px" width="6" height="4" viewBox="0 0 6 4" fill="none" stroke="#444" stroke-width="1"><path d="M.5 .5l2.500 2.500L5.500 .5"/></svg>
<div class="a" style="left:0;top:103px;width:740px;height:273px;background:#ececec"></div>
<div class="a" style="left:113.800px;top:104px;width:4.800px;height:272px;background:#f1f1f1"></div>
<div class="a" style="left:107px;top:113px;width:4px;height:102px;border-radius:2px;background:#7a7a7a"></div>
<svg style="left:106.500px;top:106.500px" width="5" height="3" viewBox="0 0 5 3"><path d="M0 3L2.500 0 5 3z" fill="#555"/></svg>
<svg style="left:106.700px;top:368.800px" width="5" height="3" viewBox="0 0 5 3"><path d="M0 0L2.500 3 5 0z" fill="#555"/></svg>
<div class="a" style="left:19.300px;top:112.400px;width:75.800px;height:44.400px;border:2px solid #a83a55;border-radius:4px;background:#1b1c3e"></div>
<span class="t" style="left:6.8px;top:111.20px;font-size:8.5px;line-height:10.20px;color:#c4505f;font-weight:400;font-family:'Liberation Sans', sans-serif;transform:scaleX(1.0000);-webkit-text-stroke:0;">1</span>
<span class="t" style="left:6.8px;top:164.90px;font-size:8.5px;line-height:10.20px;color:#555;font-weight:400;font-family:'Liberation Sans', sans-serif;transform:scaleX(1.0000);-webkit-text-stroke:0;">2</span>
<span class="t" style="left:6.8px;top:217.90px;font-size:8.5px;line-height:10.20px;color:#555;font-weight:400;font-family:'Liberation Sans', sans-serif;transform:scaleX(1.0000);-webkit-text-stroke:0;">3</span>
<span class="t" style="left:6.8px;top:270.90px;font-size:8.5px;line-height:10.20px;color:#555;font-weight:400;font-family:'Liberation Sans', sans-serif;transform:scaleX(1.0000);-webkit-text-stroke:0;">4</span>
<span class="t" style="left:6.8px;top:324.40px;font-size:8.5px;line-height:10.20px;color:#555;font-weight:400;font-family:'Liberation Sans', sans-serif;transform:scaleX(1.0000);-webkit-text-stroke:0;">5</span>
<div class="a" style="left:21px;top:114.6px;width:71.800px;height:40px;border-radius:2.500px;overflow:hidden;background:radial-gradient(ellipse 70% 80% at 40% 40%,#1f2044 0%,#1a1a39 50%,#17172f 100%)"></div>
<span class="t" style="left:29.75px;top:123.10px;font-size:5px;line-height:6.00px;color:#e2e2ec;font-weight:400;font-family:'Liberation Serif', serif;transform:scaleX(1.0344);-webkit-text-stroke:.08px;">Accessible PowerPoints</span>
<span class="t" style="left:30px;top:133.28px;font-size:2.7px;line-height:3.24px;color:#f4f4fa;font-weight:700;font-family:'Liberation Sans', sans-serif;transform:scaleX(0.8450);-webkit-text-stroke:.08px;">Steven Sturman</span>
<span class="t" style="left:30px;top:138.48px;font-size:2.7px;line-height:3.24px;color:#f4f4fa;font-weight:700;font-family:'Liberation Sans', sans-serif;transform:scaleX(0.8482);-webkit-text-stroke:.08px;">Instructional Designer</span>
<span class="t" style="left:30px;top:143.28px;font-size:2.7px;line-height:3.24px;color:#f4f4fa;font-weight:700;font-family:'Liberation Sans', sans-serif;transform:scaleX(0.8515);-webkit-text-stroke:.08px;">UB School of Social Work</span>
<div class="a" style="left:21px;top:167.6px;width:71.800px;height:40px;border-radius:2.500px;overflow:hidden;background:radial-gradient(ellipse 70% 80% at 40% 40%,#1f2044 0%,#1a1a39 50%,#17172f 100%)"></div>
<span class="t" style="left:25.25px;top:171.22px;font-size:4.8px;line-height:5.76px;color:#e2e2ec;font-weight:400;font-family:'Liberation Serif', serif;transform:scaleX(0.8869);-webkit-text-stroke:.08px;">Accessibility Checker</span>
<span class="t" style="left:26px;top:179.84px;font-size:2.6px;line-height:3.12px;color:#e2e2ec;font-weight:400;font-family:'Liberation Sans', sans-serif;transform:scaleX(1.0000);-webkit-text-stroke:.08px;">•</span>
<span class="t" style="left:29px;top:179.60px;font-size:3px;line-height:3.60px;color:#f4f4fa;font-weight:700;font-family:'Liberation Sans', sans-serif;transform:scaleX(0.9939);-webkit-text-stroke:.08px;">Review – check accessibility</span>
<span class="t" style="left:26px;top:185.84px;font-size:2.6px;line-height:3.12px;color:#e2e2ec;font-weight:400;font-family:'Liberation Sans', sans-serif;transform:scaleX(1.0000);-webkit-text-stroke:.08px;">•</span>
<span class="t" style="left:29px;top:185.60px;font-size:3px;line-height:3.60px;color:#f4f4fa;font-weight:700;font-family:'Liberation Sans', sans-serif;transform:scaleX(1.0000);-webkit-text-stroke:.08px;">Limitations</span>
<span class="t" style="left:31.9px;top:191.08px;font-size:2.2px;line-height:2.64px;color:#a9abc4;font-weight:400;font-family:'Liberation Sans', sans-serif;transform:scaleX(1.1306);-webkit-text-stroke:.08px;">Alt text for images</span>
<span class="t" style="left:31.9px;top:195.43px;font-size:2.2px;line-height:2.64px;color:#a9abc4;font-weight:400;font-family:'Liberation Sans', sans-serif;transform:scaleX(1.1321);-webkit-text-stroke:.08px;">Reading Order</span>
<span class="t" style="left:31.9px;top:200.18px;font-size:2.2px;line-height:2.64px;color:#a9abc4;font-weight:400;font-family:'Liberation Sans', sans-serif;transform:scaleX(1.0306);-webkit-text-stroke:.08px;">Embedded Videos / Closed Captions</span>
<div class="a" style="left:21px;top:220.6px;width:71.800px;height:40px;border-radius:2.500px;overflow:hidden;background:radial-gradient(ellipse 70% 80% at 40% 40%,#1f2044 0%,#1a1a39 50%,#17172f 100%)"></div>
<span class="t" style="left:24px;top:224.37px;font-size:4.8px;line-height:5.76px;color:#e2e2ec;font-weight:400;font-family:'Liberation Serif', serif;transform:scaleX(0.8851);-webkit-text-stroke:.08px;">General Considerations:</span>
<span class="t" style="left:24.75px;top:232.84px;font-size:2.6px;line-height:3.12px;color:#e2e2ec;font-weight:400;font-family:'Liberation Sans', sans-serif;transform:scaleX(1.0000);-webkit-text-stroke:.08px;">•</span>
<span class="t" style="left:28.5px;top:232.66px;font-size:2.9px;line-height:3.48px;color:#f4f4fa;font-weight:700;font-family:'Liberation Sans', sans-serif;transform:scaleX(0.9268);-webkit-text-stroke:.08px;">Do not print your slides to pdf</span>
<span class="t" style="left:24.75px;top:237.84px;font-size:2.6px;line-height:3.12px;color:#e2e2ec;font-weight:400;font-family:'Liberation Sans', sans-serif;transform:scaleX(1.0000);-webkit-text-stroke:.08px;">•</span>
<span class="t" style="left:28.5px;top:237.66px;font-size:2.9px;line-height:3.48px;color:#f4f4fa;font-weight:700;font-family:'Liberation Sans', sans-serif;transform:scaleX(0.8807);-webkit-text-stroke:.08px;">Use Unique Titles for each slide</span>
<span class="t" style="left:24.75px;top:243.19px;font-size:2.6px;line-height:3.12px;color:#e2e2ec;font-weight:400;font-family:'Liberation Sans', sans-serif;transform:scaleX(1.0000);-webkit-text-stroke:.08px;">•</span>
<span class="t" style="left:28.5px;top:243.01px;font-size:2.9px;line-height:3.48px;color:#f4f4fa;font-weight:700;font-family:'Liberation Sans', sans-serif;transform:scaleX(0.8469);-webkit-text-stroke:.08px;">Avoid Slide Transitions</span>
<span class="t" style="left:24.75px;top:248.44px;font-size:2.6px;line-height:3.12px;color:#e2e2ec;font-weight:400;font-family:'Liberation Sans', sans-serif;transform:scaleX(1.0000);-webkit-text-stroke:.08px;">•</span>
<span class="t" style="left:28.5px;top:248.26px;font-size:2.9px;line-height:3.48px;color:#f4f4fa;font-weight:700;font-family:'Liberation Sans', sans-serif;transform:scaleX(0.8684);-webkit-text-stroke:.08px;">Links should be descriptive</span>
<div class="a" style="left:21px;top:273.6px;width:71.800px;height:40px;border-radius:2.500px;overflow:hidden;background:radial-gradient(ellipse 70% 80% at 40% 40%,#1f2044 0%,#1a1a39 50%,#17172f 100%)"><div style="position:absolute;left:7.10px;top:15.40px;width:45.60px;height:23.00px;background:#eaf5f8;"></div><div style="position:absolute;left:7.60px;top:20.40px;width:21.50px;height:17.60px;background:linear-gradient(#b4dbe6,#86c3d6 50%,#9ccfdd);"></div><div style="position:absolute;left:30.25px;top:20.90px;width:21.50px;height:2.20px;background:#1c2628;border-radius:1px"></div><div style="position:absolute;left:30.25px;top:23.60px;width:21.50px;height:14.40px;background:linear-gradient(90deg,#c6ecf2,#9adbe6);"></div><div style="position:absolute;left:33.00px;top:24.40px;width:1.60px;height:1.60px;background:#2c4a55;border-radius:50%"></div><div style="position:absolute;left:33.00px;top:29.40px;width:1.60px;height:1.60px;background:#2c4a55;border-radius:50%"></div><div style="position:absolute;left:33.00px;top:33.80px;width:1.60px;height:1.60px;background:#2c4a55;border-radius:50%"></div><div style="position:absolute;left:36.50px;top:24.80px;width:6.00px;height:0.80px;background:#7fb0bd;"></div><div style="position:absolute;left:36.50px;top:29.80px;width:8.00px;height:0.80px;background:#7fb0bd;"></div><div style="position:absolute;left:36.50px;top:34.20px;width:5.00px;height:0.80px;background:#7fb0bd;"></div></div>
<span class="t" style="left:24px;top:277.37px;font-size:4.8px;line-height:5.76px;color:#e2e2ec;font-weight:400;font-family:'Liberation Serif', serif;transform:scaleX(0.8936);-webkit-text-stroke:.08px;">General Considerations:</span>
<span class="t" style="left:24.75px;top:284.94px;font-size:2.6px;line-height:3.12px;color:#e2e2ec;font-weight:400;font-family:'Liberation Sans', sans-serif;transform:scaleX(1.0000);-webkit-text-stroke:.08px;">•</span>
<span class="t" style="left:28.5px;top:284.76px;font-size:2.9px;line-height:3.48px;color:#f4f4fa;font-weight:700;font-family:'Liberation Sans', sans-serif;transform:scaleX(0.8931);-webkit-text-stroke:.08px;">Embrace white space</span>
<div class="a" style="left:21px;top:326.6px;width:71.800px;height:40px;border-radius:2.500px;overflow:hidden;background:radial-gradient(ellipse 70% 80% at 40% 40%,#1f2044 0%,#1a1a39 50%,#17172f 100%)"><div style="position:absolute;left:7.75px;top:16.90px;width:44.75px;height:22.25px;background:#f2f2ee;"></div><div style="position:absolute;left:8.30px;top:22.10px;width:21.40px;height:2.30px;background:#55b040;"></div><div style="position:absolute;left:8.30px;top:24.40px;width:21.40px;height:6.90px;background:linear-gradient(#e0b020,#e88a1c 50%,#d8602a);"></div><div style="position:absolute;left:8.30px;top:31.30px;width:21.40px;height:2.50px;background:#93b3a3;"></div><div style="position:absolute;left:8.30px;top:33.80px;width:21.40px;height:5.00px;background:#c63a30;"></div><div style="position:absolute;left:30.50px;top:21.40px;width:21.70px;height:10.60px;background:#1d2320;"></div><div style="position:absolute;left:30.50px;top:32.00px;width:21.70px;height:6.80px;background:#5cc9c6;"></div><div style="position:absolute;left:32.75px;top:25.00px;width:3.00px;height:3.00px;background:#9a8f2c;border-radius:50%"></div><div style="position:absolute;left:39.75px;top:25.00px;width:3.00px;height:3.00px;background:#9a8f2c;border-radius:50%"></div><div style="position:absolute;left:46.90px;top:25.00px;width:3.00px;height:3.00px;background:#9a8f2c;border-radius:50%"></div></div>
<span class="t" style="left:24px;top:330.62px;font-size:4.8px;line-height:5.76px;color:#e2e2ec;font-weight:400;font-family:'Liberation Serif', serif;transform:scaleX(0.8936);-webkit-text-stroke:.08px;">General Considerations:</span>
<span class="t" style="left:24.75px;top:339.04px;font-size:2.6px;line-height:3.12px;color:#e2e2ec;font-weight:400;font-family:'Liberation Sans', sans-serif;transform:scaleX(1.0000);-webkit-text-stroke:.08px;">•</span>
<span class="t" style="left:28.5px;top:338.86px;font-size:2.9px;line-height:3.48px;color:#f4f4fa;font-weight:700;font-family:'Liberation Sans', sans-serif;transform:scaleX(0.8457);-webkit-text-stroke:.08px;">Simplify fonts and colors</span>
<div class="a" style="left:207.300px;top:107.800px;width:431.700px;height:242.500px;box-shadow:0 0 0 1px #f6f6f6;overflow:hidden;background:radial-gradient(ellipse 64% 76% at 46% 46%,#262a58 0%,#1f224a 45%,#15142f 100%)"><svg style="left:0;top:0;filter:blur(1.100px)" width="432" height="244" viewBox="0 0 432 244" fill="none">
<g stroke="#8f96c8" stroke-opacity=".11" stroke-width="1.500">
<path d="M432 2L342 39 255 120 190 170M264 18l78 21M342 39l58 24 32 20M255 120l63 24 69-9 45 28M318 144l12 56-30 44M387 135l14 66 31 22M255 120l-14 60-40 64M330 200l71 1M264 18L230 0M400 63l-13 72M318 144l-78 36"/>
</g>
<g fill="#a0a6d4" fill-opacity=".17">
<circle cx="264" cy="18" r="5"/><circle cx="342" cy="39" r="5"/><circle cx="255" cy="120" r="5.500"/><circle cx="318" cy="144" r="4"/><circle cx="387" cy="135" r="4"/><circle cx="400" cy="63" r="3"/><circle cx="330" cy="200" r="3.500"/><circle cx="401" cy="201" r="3"/><circle cx="241" cy="180" r="3"/><circle cx="290" cy="170" r="2"/><circle cx="360" cy="170" r="2"/><circle cx="420" cy="110" r="3"/><circle cx="300" cy="90" r="2.500" fill-opacity=".12"/><circle cx="150" cy="30" r="7" fill-opacity=".05"/><circle cx="40" cy="60" r="9" fill-opacity=".05"/><circle cx="20" cy="150" r="8" fill-opacity=".04"/>
</g></svg></div>
<span class="t" style="left:257.7px;top:156.20px;font-size:33.5px;line-height:40.20px;color:#f6f6fa;font-weight:400;font-family:'Liberation Serif', serif;transform:scaleX(0.8931);-webkit-text-stroke:.25px;">Accessible</span>
<span class="t" style="left:398px;top:156.20px;font-size:33.5px;line-height:40.20px;color:#f6f6fa;font-weight:400;font-family:'Liberation Serif', serif;transform:scaleX(0.9426);-webkit-text-stroke:.25px;">PowerPoints</span>
<span class="t" style="left:261.5px;top:224.10px;font-size:15.5px;line-height:18.60px;color:#fff;font-weight:400;font-family:'Liberation Sans', sans-serif;transform:scaleX(0.9189);-webkit-text-stroke:.3px;">Steven Sturman</span>
<span class="t" style="left:261.5px;top:253.30px;font-size:15.5px;line-height:18.60px;color:#fff;font-weight:400;font-family:'Liberation Sans', sans-serif;transform:scaleX(0.9633);-webkit-text-stroke:.3px;">Instructional Designer</span>
<span class="t" style="left:261.5px;top:282.50px;font-size:15.5px;line-height:18.60px;color:#fff;font-weight:400;font-family:'Liberation Sans', sans-serif;transform:scaleX(0.9548);-webkit-text-stroke:.3px;">UB School of Social Work</span>
<svg style="left:177px;top:176px" width="8" height="12" viewBox="0 0 8 12"><path d="M.6 .6v9l2.200-2 1.500 3.400 1.300-.6-1.500-3.300h3z" fill="#fff" stroke="#333" stroke-width=".8" stroke-linejoin="round"/></svg>
<span class="t" style="left:121.7px;top:360.38px;font-size:9.2px;line-height:11.04px;color:#707070;font-weight:400;font-family:'Liberation Sans', sans-serif;transform:scaleX(0.9205);-webkit-text-stroke:0;">Click to add notes</span>
<div class="a" style="left:730.800px;top:104px;width:9.200px;height:271.400px;background:#f1f1f1"></div>
<div class="a" style="left:732.800px;top:113.500px;width:4px;height:15.500px;border-radius:2px;background:#6e6e6e"></div>
<svg style="left:732.300px;top:106.300px" width="5" height="3" viewBox="0 0 5 3"><path d="M0 3L2.500 0 5 3z" fill="#555"/></svg>
<svg style="left:732px;top:319.300px" width="5" height="3" viewBox="0 0 5 3"><path d="M0 0L2.500 3 5 0z" fill="#555"/></svg>
<svg style="left:731.800px;top:327.300px" width="5.500" height="6.500" viewBox="0 0 5.500 6.500"><path d="M0 3L2.750 0 5.500 3zM0 6.500L2.750 3.500 5.500 6.500z" fill="#555"/></svg>
<svg style="left:731.800px;top:337.300px" width="5.500" height="6.500" viewBox="0 0 5.500 6.500"><path d="M0 0L2.750 3 5.500 0zM0 3.500L2.750 6.500 5.500 3.500z" fill="#555"/></svg>
<svg style="left:732px;top:361.200px" width="5" height="3" viewBox="0 0 5 3"><path d="M0 3L2.500 0 5 3z" fill="#555"/></svg>
<svg style="left:732px;top:369.200px" width="5" height="3" viewBox="0 0 5 3"><path d="M0 0L2.500 3 5 0z" fill="#555"/></svg>
<div class="a" style="left:0;top:375.400px;width:740px;height:13px;background:#f4f4f4"></div>
<span class="t" style="left:6.8px;top:377.80px;font-size:7.5px;line-height:9.00px;color:#555;font-weight:400;font-family:'Liberation Sans', sans-serif;transform:scaleX(0.7905);">Slide 1 of 12</span>
<svg style="left:49.500px;top:377.500px" width="9" height="9" viewBox="0 0 9 9" fill="none" stroke="#444" stroke-width=".8" stroke-linejoin="round"><path d="M4.500 1.600C3.500 .8 2 .8 .8 1.200v6c1.200-.4 2.700-.4 3.700.4 1-.8 2.500-.8 3.700-.4v-6C7 .8 5.500 .8 4.500 1.600zM4.500 1.600v6"/></svg>
<svg style="left:67.500px;top:377px" width="10" height="10" viewBox="0 0 10 10" fill="none" stroke="#444" stroke-width=".8" stroke-linecap="round"><circle cx="4.600" cy="1.600" r="1"/><path d="M1 3.400l2.400.6h2.400l2.400-.6M3.400 4v2L2.200 9M5.800 4v2L7 9"/><path d="M6.400 7.400l1 1 1.800-2" stroke-width=".7"/></svg>
<span class="t" style="left:79px;top:377.80px;font-size:7.5px;line-height:9.00px;color:#222;font-weight:700;font-family:'Liberation Sans', sans-serif;transform:scaleX(0.8000);">Accessibility: Investigate</span>
<svg style="left:498px;top:378px" width="9" height="8" viewBox="0 0 9 8" fill="none" stroke="#444" stroke-width=".8"><path d="M.4 5h8.200M.4 6.600h8.200M.4 8h8.200M1.600 3.400L4.500 .6l2.900 2.800z"/></svg>
<span class="t" style="left:508.7px;top:378.10px;font-size:7px;line-height:8.40px;color:#333;font-weight:400;font-family:'Liberation Sans', sans-serif;transform:scaleX(0.8389);">Notes</span>
<div class="a" style="left:538.500px;top:376px;width:14.500px;height:12px;background:#dcdcdc"></div>
<svg style="left:541.500px;top:378px" width="9" height="8" viewBox="0 0 9 8" fill="none" stroke="#333" stroke-width=".8"><rect x=".5" y=".5" width="8" height="7"/><path d="M3 .5v7M.5 2.800h2.500M.5 5.200h2.500M4.400 2.400h2.800v2.400H4.400z"/></svg>
<svg style="left:565.500px;top:378px" width="9" height="8" viewBox="0 0 9 8" fill="none" stroke="#444" stroke-width=".8"><rect x=".5" y=".5" width="3" height="2.800"/><rect x="5.500" y=".5" width="3" height="2.800"/><rect x=".5" y="4.700" width="3" height="2.800"/><rect x="5.500" y="4.700" width="3" height="2.800"/></svg>
<svg style="left:588px;top:378px" width="9" height="8" viewBox="0 0 9 8" fill="none" stroke="#444" stroke-width=".8"><path d="M.5 .8h3.500l.5.600.5-.600h3.500v6.400H5l-.5.500-.5-.5H.5zM4.500 1.400v6M1.600 2.800h1.800M1.600 4.400h1.800M5.600 2.800h1.800M5.600 4.400h1.800"/></svg>
<svg style="left:611px;top:377.500px" width="9" height="9" viewBox="0 0 9 9" fill="none" stroke="#444" stroke-width=".8"><path d="M0 .8h9M.8 .8v4.600h7.400V.8M4.500 5.400v2.800M2.600 8.400h3.800"/></svg>
<div class="a" style="left:630px;top:381.600px;width:4px;height:.8px;background:#555"></div>
<div class="a" style="left:638px;top:381.600px;width:57px;height:.8px;background:#8a8a8a"></div>
<div class="a" style="left:666.500px;top:380.300px;width:.8px;height:3.400px;background:#777"></div>
<div class="a" style="left:653px;top:378.500px;width:2.200px;height:7px;background:#444"></div>
<div class="a" style="left:698.500px;top:381.600px;width:4.400px;height:.8px;background:#555"></div><div class="a" style="left:700.300px;top:379.800px;width:.8px;height:4.400px;background:#555"></div>
<span class="t" style="left:709px;top:378.10px;font-size:7px;line-height:8.40px;color:#666;font-weight:400;font-family:'Liberation Sans', sans-serif;transform:scaleX(0.9286);-webkit-text-stroke:0;">59%</span>
<svg style="left:728.500px;top:377.500px" width="9" height="9" viewBox="0 0 9 9" fill="none" stroke="#444" stroke-width=".8"><circle cx="4.500" cy="4.500" r="2.200"/><path d="M4.500 0v2M4.500 7v2M0 4.500h2M7 4.500h2M3.500 1l1-1 1 1M3.500 8l1 1 1-1M1 3.500l-1 1 1 1M8 3.500l1 1-1 1"/></svg>
<div class="a" style="left:0;top:387.800px;width:740px;height:28.200px;background:linear-gradient(90deg,#e3eaf3 0%,#dfe7f1 50%,#d6e1ee 100%);border-top:1px solid #e9eef5"></div>
<svg style="left:12px;top:395.7px" width="13" height="13" viewBox="0 0 13 13"><defs><linearGradient id="wg" x1="0" y1="0" x2="1" y2="1"><stop offset="0" stop-color="#4cc2f5"/><stop offset="1" stop-color="#1583d8"/></linearGradient></defs><rect x="0" y="0" width="6" height="6" rx=".6" fill="url(#wg)"/><rect x="7" y="0" width="6" height="6" rx=".6" fill="url(#wg)"/><rect x="0" y="7" width="6" height="6" rx=".6" fill="url(#wg)"/><rect x="7" y="7" width="6" height="6" rx=".6" fill="url(#wg)"/></svg>
<div class="a" style="left:34px;top:394.500px;width:125px;height:16px;border-radius:8px;background:#f6f9fc;border:1px solid #e3e9f0"></div>
<svg style="left:40px;top:397.7px" width="9" height="9" viewBox="0 0 9 9" fill="none" stroke="#222" stroke-width="1.100"><circle cx="3.700" cy="3.700" r="2.900"/><path d="M5.900 5.900l2.600 2.600"/></svg>
<span class="t" style="left:54.7px;top:397.40px;font-size:8px;line-height:9.60px;color:#5c5c5c;font-weight:400;font-family:'Liberation Sans', sans-serif;transform:scaleX(0.9240);">Search</span>
<div class="a" style="left:167.800px;top:395.2px;width:13.600px;height:13.600px;border-radius:42%;transform:rotate(-12deg);background:conic-gradient(from 300deg,#2f8df0 0deg,#5a6ff0 60deg,#b25be8 110deg,#f0559a 160deg,#f7a13a 210deg,#f3c93a 240deg,#4cc38a 280deg,#2fa8e8 330deg,#2f8df0 360deg)"></div>
<div class="a" style="left:172.200px;top:399.5px;width:4.800px;height:5.400px;border-radius:45%;transform:rotate(20deg);background:#f4f7fb"></div>
<svg style="left:192.500px;top:395.7px" width="14" height="13" viewBox="0 0 14 13"><path d="M.5 2a1 1 0 0 1 1-1h3.500l1.500 1.500h6a1 1 0 0 1 1 1V11a1 1 0 0 1-1 1h-11a1 1 0 0 1-1-1z" fill="#e8a825"/><path d="M.5 4.500h13V11a1 1 0 0 1-1 1h-11a1 1 0 0 1-1-1z" fill="#fbd35a"/><rect x="3.500" y="8.500" width="7" height="3.500" fill="#3f8fdc"/></svg>
<svg style="left:218px;top:395.7px" width="14" height="13" viewBox="0 0 14 13"><rect x="4" y=".5" width="9.500" height="12" rx="1" fill="#2b7cd3"/><rect x="4" y=".5" width="9.500" height="4" fill="#41a5ee"/><rect x="4" y="8.500" width="9.500" height="4" fill="#103f91"/><rect x=".5" y="3" width="7" height="7" rx=".8" fill="#185abd"/></svg>
<span class="t" style="left:219.6px;top:399.18px;font-size:5.2px;line-height:6.24px;color:#fff;font-weight:700;font-family:'Liberation Sans', sans-serif;transform:scaleX(1.0000);-webkit-text-stroke:.08px;">W</span>
<div class="a" style="left:240px;top:391.500px;width:20.500px;height:22.500px;border-radius:2.500px;background:#eef2f8;border:1px solid #e8edf4"></div>
<svg style="left:243px;top:395.7px" width="14" height="13" viewBox="0 0 14 13"><circle cx="8" cy="6.500" r="5.800" fill="#d35230"/><path d="M8 .7A5.800 5.800 0 0 1 13.800 6.500H8z" fill="#ff8f6b"/><path d="M8 6.500h5.800A5.800 5.800 0 0 1 8 12.300z" fill="#ed6c47"/><rect x=".5" y="3" width="7" height="7" rx=".8" fill="#c43e1c"/></svg>
<span class="t" style="left:245.2px;top:399.06px;font-size:5.4px;line-height:6.48px;color:#fff;font-weight:700;font-family:'Liberation Sans', sans-serif;transform:scaleX(1.0000);-webkit-text-stroke:.08px;">P</span>
<div class="a" style="left:245.500px;top:411.500px;width:8px;height:1.500px;border-radius:1px;background:#2f7fd6"></div>
<div class="a" style="left:269.500px;top:395.7px;width:13px;height:13px;border-radius:1.500px;background:#2e2d14;border:1px solid #c9c322"></div>
<span class="t" style="left:271.8px;top:398.56px;font-size:6.4px;line-height:7.68px;color:#e6e04a;font-weight:700;font-family:'Liberation Sans', sans-serif;transform:scaleX(0.9556);">Fw</span>
<svg style="left:294.500px;top:395.4px" width="14" height="14" viewBox="0 0 14 14"><defs><radialGradient id="ff" cx=".7" cy=".2" r="1"><stop offset="0" stop-color="#ffd43a"/><stop offset=".45" stop-color="#ff7a25"/><stop offset=".9" stop-color="#e8265f"/></radialGradient></defs><circle cx="7" cy="7.300" r="6.200" fill="url(#ff)"/><circle cx="7.300" cy="7" r="3.200" fill="#7b3fd9"/><path d="M3.200 4c1.500-.5 3 .2 3.600 1.200-1.300 0-2 .8-1.800 1.800.3 1.300 2 2 4 1-.7 1.800-2.800 2.500-4.500 1.600C2.800 8.600 2.400 6 3.200 4z" fill="#ff9a2e"/></svg>
<svg style="left:319.500px;top:395.7px" width="13" height="13" viewBox="0 0 13 13"><circle cx="6.500" cy="6.500" r="6.200" fill="#e94335"/><path d="M6.500 6.500L1.130 9.600A6.200 6.200 0 0 0 7.400 12.640z" fill="#34a853"/><path d="M6.500 6.500L1.130 9.600A6.200 6.200 0 0 1 1.130 3.400z" fill="#34a853"/><path d="M6.500 6.500l.9 6.140A6.200 6.200 0 0 0 11.870 3.400z" fill="#fbbc05"/><circle cx="6.500" cy="6.500" r="2.900" fill="#fff"/><circle cx="6.500" cy="6.500" r="2.200" fill="#4285f4"/></svg>
<div class="a" style="left:328px;top:393.7px;width:6.500px;height:6.500px;border-radius:50%;background:#2b2b33;border:.6px solid #ddd"></div>
<svg style="left:344.500px;top:395.7px" width="14" height="13" viewBox="0 0 14 13"><rect x="4" y="1" width="9.500" height="11" rx="1" fill="#1a74cf"/><rect x="4" y="1" width="9.500" height="4" fill="#35a0ea"/><path d="M4 6.500l4.750 3 4.750-3V11a1 1 0 0 1-1 1H5a1 1 0 0 1-1-1z" fill="#7fd0f7"/><rect x=".5" y="3" width="7" height="7" rx=".8" fill="#0f64b8"/></svg>
<span class="t" style="left:346.4px;top:399.18px;font-size:5.2px;line-height:6.24px;color:#fff;font-weight:700;font-family:'Liberation Sans', sans-serif;transform:scaleX(1.0000);-webkit-text-stroke:.08px;">O</span>
<svg style="left:370.500px;top:395.7px" width="13" height="13" viewBox="0 0 13 13"><rect x="0" y="0" width="13" height="13" rx="2" fill="#b30b00"/><path d="M2.600 10c1.800-1 3.200-3.600 3.700-6.200.2-1.200-.9-1.300-.9-.2 0 2.400 2.600 5 4.800 5 1 0 .9-1-.2-1-2 0-5.400 1-7 2.200-.8.600-1 .5-.4.200z" fill="none" stroke="#fff" stroke-width=".8"/></svg>
<svg style="left:396.500px;top:395.4px" width="14" height="14" viewBox="0 0 14 14"><path d="M7 .6c1.200 0 2 .8 2.600 1.900l3.400 5.800c1 1.800-.2 3.900-2.300 3.900H3.300C1.200 12.200 0 10.100 1 8.300l3.400-5.800C5 1.400 5.800 .6 7 .6z" fill="#3fa65a"/><path d="M7 2.800l2.200 3.600H4.800z" fill="#8fd6a0"/><path d="M3.200 9.800l1.400-2.400 1.800 3.200H4.200z" fill="#d9f2df"/><path d="M10.800 9.800L9.400 7.400 7.600 10.600h2.200z" fill="#2a7f42"/></svg>
<div class="a" style="left:198.0px;top:411.700px;width:3px;height:1.200px;border-radius:1px;background:#8a8f98"></div>
<div class="a" style="left:324.0px;top:411.700px;width:3px;height:1.200px;border-radius:1px;background:#8a8f98"></div>
<div class="a" style="left:375.5px;top:411.700px;width:3px;height:1.200px;border-radius:1px;background:#8a8f98"></div>
<div class="a" style="left:401.7px;top:411.700px;width:3px;height:1.200px;border-radius:1px;background:#8a8f98"></div>
<svg style="left:515.500px;top:395.9px" width="15" height="14" viewBox="0 0 15 14"><circle cx="6.500" cy="6.800" r="5.600" fill="#f2a431"/><path d="M6.500 13.200h5.500a2.100 2.100 0 0 0 .2-4.200 2.800 2.800 0 0 0-5.300-.4A2.300 2.300 0 0 0 6.500 13.200z" fill="#cdd8ea"/></svg>
<div class="a" style="left:523px;top:392.500px;width:8px;height:8px;border-radius:50%;background:#c42b1c"></div>
<span class="t" style="left:525.6px;top:393.30px;font-size:5.5px;line-height:6.60px;color:#fff;font-weight:700;font-family:'Liberation Sans', sans-serif;transform:scaleX(1.0000);-webkit-text-stroke:.08px;">3</span>
<span class="t" style="left:533.8px;top:392.30px;font-size:7.5px;line-height:9.00px;color:#333;font-weight:400;font-family:'Liberation Sans', sans-serif;transform:scaleX(0.8000);">81°F</span>
<span class="t" style="left:533.8px;top:401.90px;font-size:7.5px;line-height:9.00px;color:#666;font-weight:400;font-family:'Liberation Sans', sans-serif;transform:scaleX(0.9523);">Mostly sunny</span>
<svg style="left:609.500px;top:400.7px" width="7" height="4" viewBox="0 0 7 4" fill="none" stroke="#333" stroke-width="1"><path d="M.5 3.500L3.500 .6l3 2.900"/></svg>
<svg style="left:626px;top:396.7px" width="11" height="11" viewBox="0 0 11 11" fill="none"><path d="M9.500 5A4 4 0 0 0 2 3.200M1.500 6A4 4 0 0 0 9 7.800" stroke="#7d8796" stroke-width="1.100"/><path d="M2 .8v2.600h2.600M9 10.200V7.600H6.400" stroke="#7d8796" stroke-width=".9"/><rect x="5.800" y="5.800" width="4.800" height="4.800" rx="1" fill="#f2a33a"/></svg>
<svg style="left:646px;top:396.7px" width="8" height="11" viewBox="0 0 8 11" fill="none"><rect x="2.500" y=".5" width="3" height="6" rx="1.500" fill="#3b78d8"/><path d="M1 5a3 3 0 0 0 6 0M4 8v2.200" stroke="#3b78d8" stroke-width=".9"/></svg>
<svg style="left:662.500px;top:397.2px" width="11" height="10" viewBox="0 0 11 10" fill="none" stroke="#333" stroke-width=".9"><rect x=".5" y=".8" width="8" height="6" rx=".6"/><path d="M3 9h3.500M4.600 6.800V9"/><rect x="7" y="3.400" width="3.400" height="5.600" rx=".5" fill="#dfe7f1"/></svg>
<svg style="left:676.500px;top:397.7px" width="10" height="9" viewBox="0 0 10 9" fill="none" stroke="#333" stroke-width=".9"><path d="M.6 3.200h1.800L4.600 1v7L2.400 5.800H.6z"/><path d="M6 3a2.200 2.200 0 0 1 0 3M7.400 1.800a4 4 0 0 1 0 5.400"/></svg>
<span class="t" style="left:703px;top:392.50px;font-size:7.5px;line-height:9.00px;color:#222;font-weight:400;font-family:'Liberation Sans', sans-serif;transform:scaleX(0.9107);">3:29 PM</span>
<span class="t" style="left:697px;top:401.70px;font-size:7.5px;line-height:9.00px;color:#222;font-weight:400;font-family:'Liberation Sans', sans-serif;transform:scaleX(0.9545);">7/10/2025</span></div></body></html>
